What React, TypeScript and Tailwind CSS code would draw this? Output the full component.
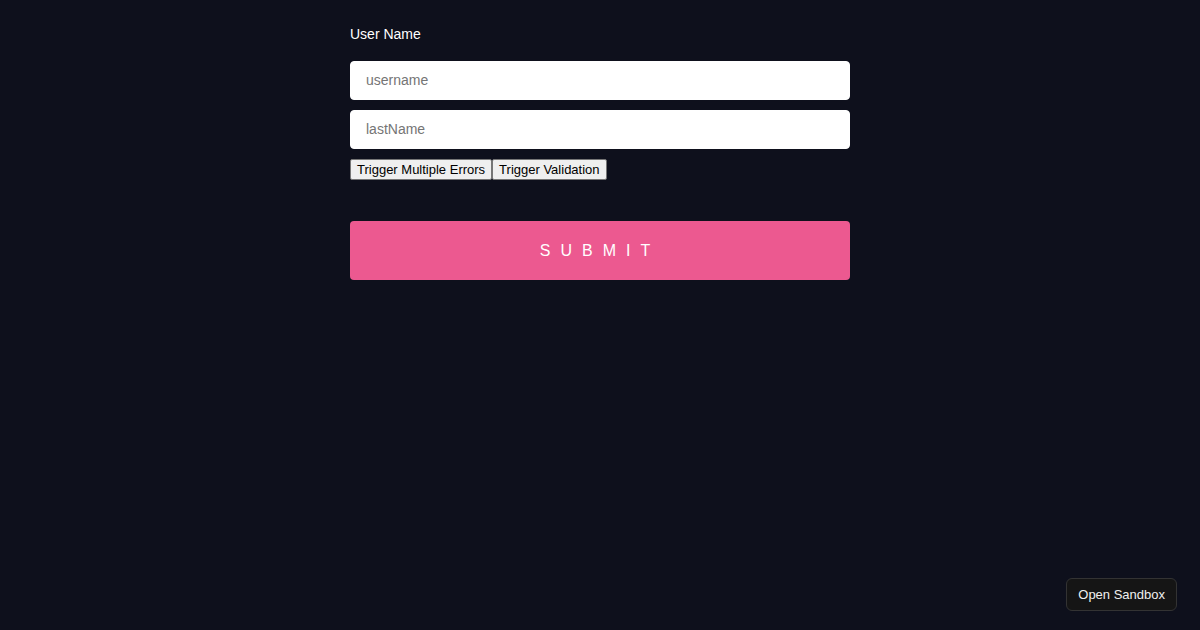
import React from "react";

export default function App() {
  return (
    <div className="min-h-[630px] w-full bg-[#0e101c] relative" style={{ fontFamily: '"Liberation Sans", Arial, sans-serif' }}>
      <form className="max-w-[500px] mx-auto" onSubmit={(e) => e.preventDefault()}>
        <label className="block text-left text-white text-[14px] leading-[28px] pt-[20px] mb-[13px]">User Name</label>
        <input
          placeholder="username"
          className="block box-border w-full h-[39px] rounded-[4px] border border-white bg-white px-[15px] pb-[2px] text-[14px] text-black placeholder:text-[#757575] mb-[10px] outline-none"
        />
        <input
          placeholder="lastName"
          className="block box-border w-full h-[39px] rounded-[4px] border border-white bg-white px-[15px] pb-[2px] text-[14px] text-black placeholder:text-[#757575] mb-[10px] outline-none"
        />
        <div className="flex">
          <button type="button" className="h-[21px] px-[6px] text-[13px] leading-[15px] text-black bg-[#efefef] border border-[#767676] rounded-[2px]">
            Trigger Multiple Errors
          </button>
          <button type="button" className="h-[21px] px-[6px] text-[13px] leading-[15px] text-black bg-[#efefef] border border-[#767676] rounded-[2px]">
            Trigger Validation
          </button>
        </div>
        <button
          type="submit"
          className="block w-full mt-[41px] h-[59px] bg-[#ec5990] text-white uppercase text-[16px] font-light tracking-[10px] rounded-[4px] leading-[18px]"
        >
          Submit
        </button>
      </form>
      <button className="absolute right-[23px] bottom-[19px] h-[33px] px-[11px] text-[13px] text-[#f0f0f0] bg-[#151515] border border-[#333333] rounded-[6px]">
        Open Sandbox
      </button>
    </div>
  );
}
